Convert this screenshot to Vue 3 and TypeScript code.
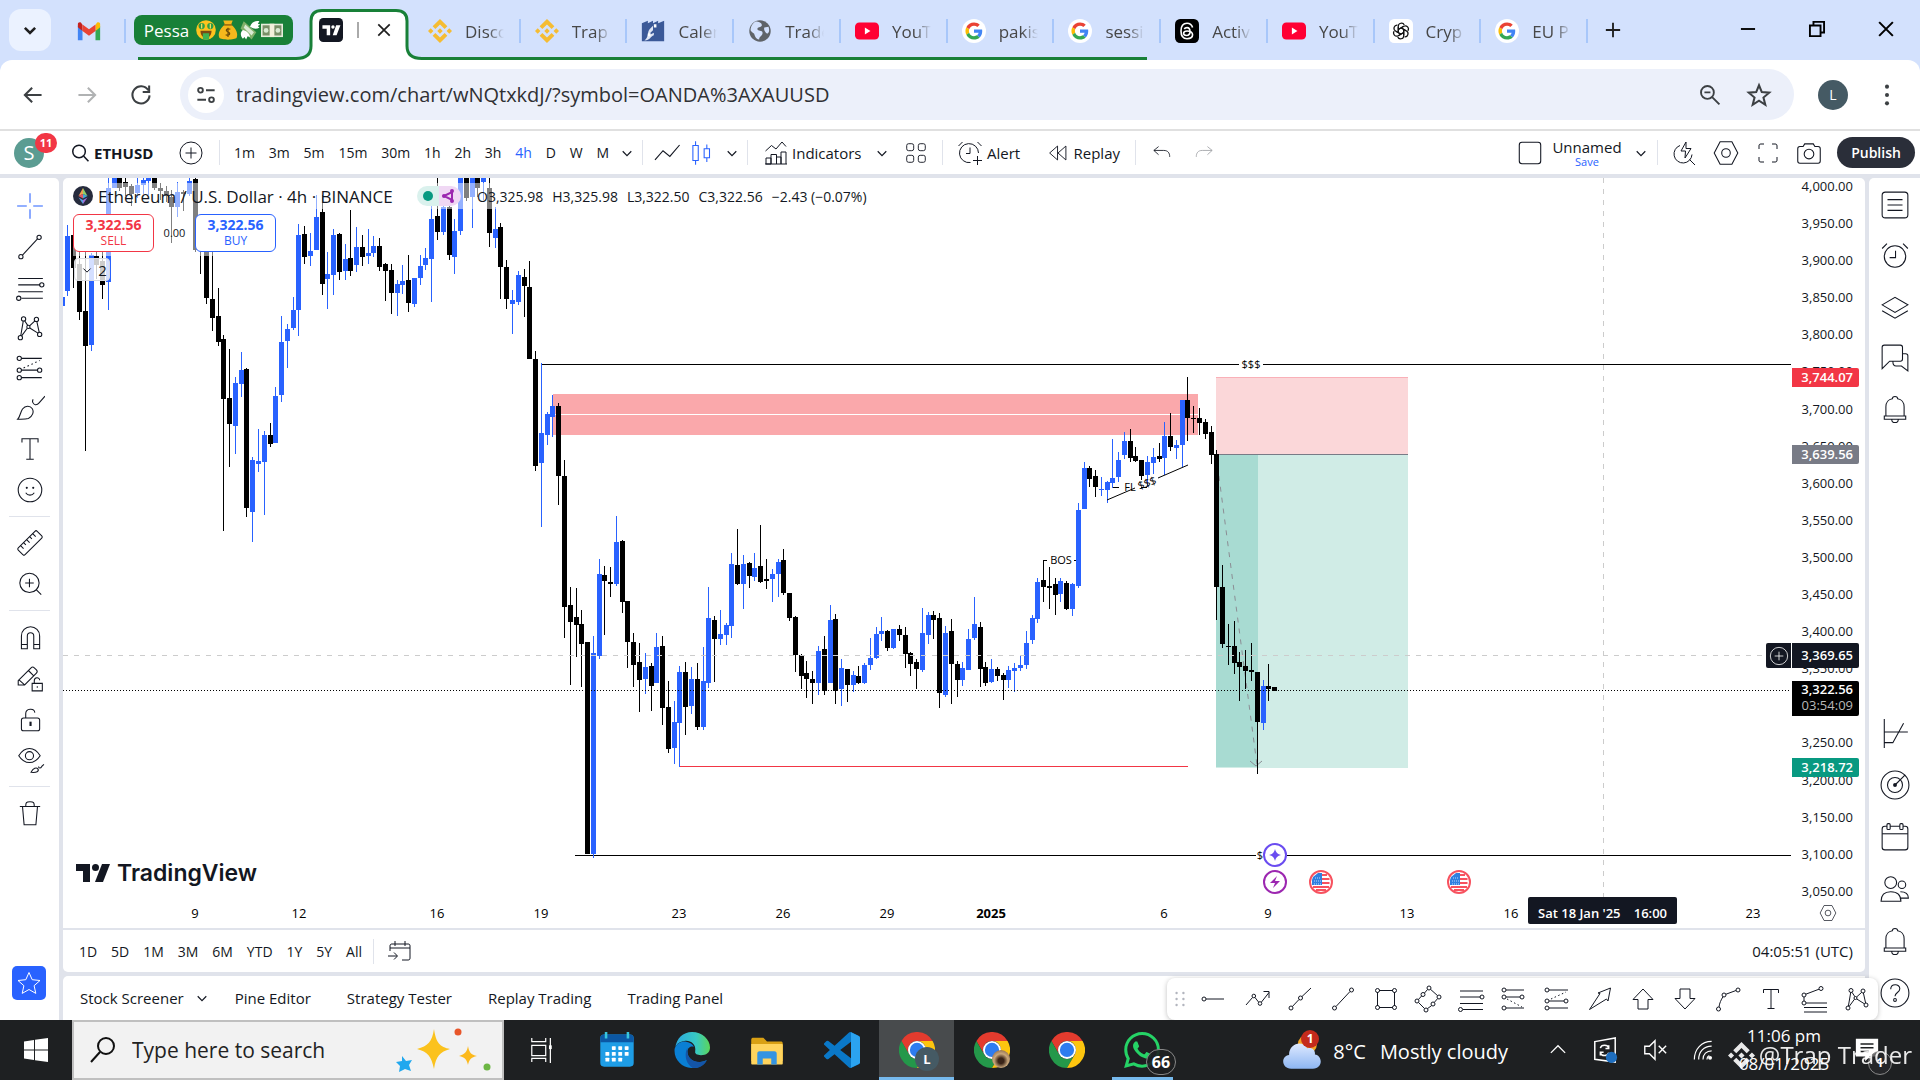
<script setup lang="ts">
import { h, ref, type FunctionalComponent } from 'vue'

/* ---------- icons ---------- */
const c = (x: number, y: number, r: number, extra = '') => `<circle cx="${x}" cy="${y}" r="${r}" ${extra}/>`
const p = (d: string, extra = '') => `<path d="${d}" ${extra}/>`
const F = 'fill="currentColor" stroke="none"'
const fill = (color: string) => `fill="${color}" stroke="none"`

const icons: Record<string, string> = {
  chevron: p('M9 12l5 5 5-5', 'stroke-width="1.400"'),
  cross: p('M14 2v9M14 17v9M2 14h9M17 14h9'),
  trend: c(5.5, 23, 2) + c(22.5, 5, 2) + p('M7 21.5L21 6.5'),
  fib: p('M3 6h23M3 12h20.5M3 18.5h23M6 24.5h20') + c(25, 12, 2) + c(3.5, 24.5, 2),
  pattern: c(8, 5.5, 2) + c(20, 6, 2) + c(5, 23, 2) + c(23, 20, 2) + c(12.5, 13, 1.5) + p('M7.7 7.5L5.4 21M9 7.3l3 4.5M13.6 12L18.6 7.4M20.4 8l2.2 10M11.5 14.2L6.2 21.4M13.8 14l7.6 4.8'),
  predict: c(4, 5, 2) + c(4, 16, 2) + c(4, 23, 2) + c(23, 16, 2) + p('M6 5h19M6 16h15M6 23h19') + p('M8 14l15-7', 'stroke-dasharray="1.5 2.5"'),
  predict2: c(4, 5, 2) + c(22, 12, 2) + c(4, 12, 2) + c(4, 23, 2) + p('M6 5h18M6 12h14M6 23h18') + p('M7 14l15 8', 'stroke-dasharray="1.5 2.5"'),
  brush: p('M2.5 23.500C5 21 4.500 18 7 14c2.600-3.300 7-3.500 9-.5s.5 7.500-3.500 9.300c-3 1-7 .7-10 .7zM17 5c-1.500 2 0 4.500 2 5 1.500.3 2.500-.5 3.500-1.700L28 2'),
  text: p('M6.500 8V4.500h15V8M14 4.500v19M10.500 23.500h7'),
  smile: c(14, 14, 11) + c(11, 12, 1, F) + c(17, 12, 1, F) + p('M10 16.500c2 3 6 3 8 0'),
  ruler: '<g transform="rotate(-45 14 14)"><rect x="1.500" y="9.500" width="25" height="9" rx="1.500"/><path d="M6 9.500v4M10 9.500v3M14 9.500v4M18 9.500v3M22 9.500v4"/></g>',
  zoomin: c(13.500, 13, 9) + p('M9.500 13h8M13.500 9v8M20 19.500l4.500 4.500'),
  magnet: p('M6 25V13a8.500 8.500 0 0 1 17 0v12h-5.500V13a3 3 0 0 0-6 0v12zM6 21h5.500M17.500 21H23'),
  pencillock: p('M3 16.500L15 4.500c1-1 2-1 3 0l2 2c1 1 1 2 0 3L9 20.500H3zM12.500 7l5 5M4 16l5 4.500M16 19h9.500v7H16zM18 19v-2.500c0-3.500 5-3.500 5-.5') + c(20.800, 22.500, .7, F),
  lock: '<rect x="6" y="13" width="17" height="12" rx="2"/>' + p('M10 13V9c0-5 8-5.500 8.500-1') + '<rect x="13.500" y="16.500" width="2" height="4" fill="currentColor" stroke="none"/>',
  eye: p('M3.500 10C9 1 18 1 23.500 10 18 18.500 9 18.500 3.500 10z') + c(13.500, 10, 3.800) + p('M15 25.500c2-4 5-5 6.500-3 1 2-1 3.500-6.500 3zM22 20c0 2 2 2 3 0l2-2'),
  trash: p('M4.500 8h19M7 8l1.500 17h11L21 8M10 8c0-4 .5-4.500 4-4.500s4 .5 4 4.500'),
  star: p('M14 3.500l3.200 7.200 7.800.8-5.900 5.200 1.700 7.700L14 20.500l-6.800 3.900 1.700-7.700L3 11.500l7.800-.8z'),
  search: c(11.500, 12, 8, 'stroke-width="1.900"') + p('M17.500 18l6 6.500', 'stroke-width="1.900"'),
  plusc: c(14, 14, 11) + p('M14 8.500v11M8.500 14h11'),
  linechart: p('M3.500 20l7-8 6 5L25 7'),
  candles: p('M8 3v4M8 21v4M5.500 7h5v14h-5zM18.500 6v4M18.500 18.500v4M16 10h5v8.500h-5z'),
  indicators: p('M3.500 12l6-5.500L14 10l6-7 4 4.500M4 25v-6h5v6zM9 25v-9.500h5.500V25M14.500 18H19v7M19 25V13h5v12M3 25h22'),
  grid: '<rect x="4" y="4" width="7.500" height="7.500" rx="2"/><rect x="16.500" y="4" width="7.500" height="7.500" rx="2"/><rect x="4" y="16.500" width="7.500" height="7.500" rx="2"/><rect x="16.500" y="16.500" width="7.500" height="7.500" rx="2"/>',
  alertplus: p('M22.500 14a9.500 9.500 0 1 0-8 9.500M14 8.500v6h-4M2.500 7l4-4M21.500 3l4 4M21.500 17v9M17 21.500h9'),
  alarm: c(14, 14.500, 10) + p('M14.500 9v6.500H9M2 7l4.500-4.500M21.500 2.500L26 7'),
  replay: p('M13.500 6.500v15L5 14zM22.500 6.500v15L14 14z'),
  undo: p('M10 6.500L4.500 11 10 16M4.500 11H16c5 0 7 3 7 7.500'),
  redo: p('M18 6.500l5.500 4.500L18 16M23.500 11H12c-5 0-7 3-7 7.500'),
  square: '<rect x="4" y="4" width="20" height="20" rx="2.500"/>',
  quick: p('M10 6.500a9 9 0 1 0 12 9M19.500 20.500L25 26M16 3l-5 9h4.500l-.5 7 6-9.500h-5z'),
  hex: p('M8.500 3.500h11l5.500 10.500-5.500 10.500h-11L3 14z') + c(14, 14, 4),
  full: p('M5 10V7c0-1.500.5-2 2-2h3M18 5h3c1.500 0 2 .5 2 2v3M23 18v3c0 1.500-.5 2-2 2h-3M10 23H7c-1.500 0-2-.5-2-2v-3'),
  camera: p('M10 5.500L8.500 8H5.500C4 8 3.500 8.500 3.500 10v11.500C3.500 23 4 23.500 5.500 23.500h17c1.500 0 2-.5 2-2V10c0-1.500-.5-2-2-2h-3L18 5.500z') + c(14, 15, 4.500),
  list: '<rect x="2" y="2" width="24" height="24" rx="3"/>' + p('M7 9h14M7 14h14M7 19h14'),
  layers: p('M2 12l12-7 12 7-12 7zM2 17.500l12 7 12-7'),
  chat: p('M2 24V4c0-1.500.7-2 2-2h15c1.500 0 2 .7 2 2v11c0 1.500-.5 2-2 2H9zM21 10h3c1.500 0 2 .5 2 2v14l-6-4.500h-5c-2 0-3-2-3-4.500'),
  bell: p('M5.500 20v-8c0-4 2.500-7 6-7.500 0-3 5-3 5 0 3.500.5 6 3.500 6 7.500v8M4 20.500h20v3H4zM11 24c0 3.500 6 3.500 6 0'),
  dom: p('M4 1v30M4 13h22M4 23h8L22 5'),
  radar: c(14, 14, 13) + c(14, 14, 7) + c(14, 14, 1.800, F) + p('M14 14L23.500 4.500'),
  calendar: '<rect x="2" y="4" width="24" height="22" rx="2.500"/>' + p('M2 11h24') + '<rect x="6.500" y="1.500" width="3" height="5.500" rx="1" fill="#fff"/><rect x="18.500" y="1.500" width="3" height="5.500" rx="1" fill="#fff"/>',
  people: c(10, 8, 5.500) + c(20.500, 10, 3.500) + p('M1 25.500c0-7 3.500-9 9-9s9.500 2 9.500 9zM19 16.500c4 0 7.500 1.500 7.500 6H19'),
  help: c(14, 14, 13) + p('M10 10.500c0-5.500 8.500-5.500 8.500-.5 0 3.500-4.500 3.500-4.500 7') + c(14, 20.500, 1.300),
  goto: p('M4 14V9c0-1.500.7-2 2-2h16c1.500 0 2 .5 2 2v12c0 1.500-.5 2-2 2h-6M4 11h20M9 4v5M19 4v5M2 19h9M8 15.500l3.500 3.500L8 22.500'),
  hray: c(4, 14, 2) + p('M6 14h18'),
  zigzag: p('M3 20l6.500-7.500M12 12.500l3.500 4.500M18.500 17L26 7.500M20.500 6.500H26V13') + c(10.800, 11, 1.800) + c(17, 18.500, 1.800),
  ray: c(5, 23, 2) + c(14.500, 13, 2) + p('M6.400 21.500l6.600-7M16 11.500L25 3'),
  rect: p('M7 5.500h14M7 22.500h14M5.500 7v14M22.500 7v14') + c(5.500, 5.500, 2) + c(22.500, 5.500, 2) + c(5.500, 22.500, 2) + c(22.500, 22.500, 2),
  rotrect: c(15, 3, 2) + c(25, 12, 2) + c(12, 25, 2) + c(3, 16, 2) + c(9, 9.500, 2) + c(19, 19, 2) + p('M13.500 4.500l-3 3.500M7.600 11L4.400 14.500M16.500 4.300l7 6.300M23.600 13.600l-3.300 3.800M17.600 20.600l-4.100 3M4.500 17.500l6 6'),
  arrowne: p('M3.500 24.500L14 8.500 12 8l12.500-5L22 16l-1.500-2z'),
  up: p('M14 4l10 10.500h-5V24H9v-9.500H4z'),
  down: p('M14 24L4 13.500h5V4h10v9.500h5z'),
  curve: c(4.500, 24, 2) + c(10, 10, 2) + c(24, 5, 2) + p('M5 22c.5-4 2-7 4-10.300M12 9.200L22 5.500'),
  fibch: c(4, 10, 2) + c(21, 3.500, 2) + c(4, 18, 2) + p('M5.800 9.200L19 4.200M4 12v4M6 18h21M4 22.500h23M4 27h23'),
  grip: [7, 14, 21].map(y => c(10, y, 1.400, F) + c(18, y, 1.400, F)).join(''),
  back: p('M24 14H5M13 5.500L4.500 14l8.500 8.500', 'stroke-width="2.400"'),
  fwd: p('M4 14h19M15 5.500l8.500 8.500-8.500 8.500', 'stroke-width="2.400"'),
  reload: p('M22.500 8.500A10 10 0 1 0 24 14.500M23.500 3v7.500H16', 'stroke-width="2.400"'),
  tune: c(7, 8, 3, 'stroke-width="2.400"') + c(21, 20, 3, 'stroke-width="2.400"') + p('M14 8h11M3 20h11', 'stroke-width="2.400"'),
  zoomout: c(11, 11, 7.500, 'stroke-width="2.200"') + p('M16.500 16.500L25 25M7.500 11h7', 'stroke-width="2.200"'),
  bookmark: p('M14 3.500l3 7.400 8 .6-6.200 5.200 2 7.800-6.800-4.300-6.800 4.300 2-7.800L3 11.500l8-.6z', 'stroke-width="2.200"'),
  dots: c(14, 5, 2.200, F) + c(14, 14, 2.200, F) + c(14, 23, 2.200, F),
  tabdown: p('M8 11.500l6 6 6-6', 'stroke-width="3"'),
  x: p('M6 6l16 16M22 6L6 22', 'stroke-width="2.400"'),
  plus: p('M14 4v20M4 14h20', 'stroke-width="2.600"'),
  min: p('M5 14h18', 'stroke-width="2.400"'),
  restore: p('M5 9.500h13.500V23H5zM9.500 9V5H23v13.500h-4', 'stroke-width="2.400"'),
  gmail: p('M2 24h5V13l-5-4z', fill('#4285f4')) + p('M21 24h5V9l-5 4z', fill('#34a853')) + p('M2 6.500V10l5 4V7.500L5.500 5C3.500 4 2 5 2 6.500z', fill('#c5221f')) + p('M26 6.500V10l-5 4V7.500L22.500 5C24.500 4 26 5 26 6.500z', fill('#fbbc04')) + p('M7 7v7l7 5.200 7-5.200V7l-7 5.200z', fill('#ea4335')),
  binance: '<g transform="scale(1.167)">' + p('M16.624 13.920l2.718 2.716-7.353 7.353-7.353-7.352 2.717-2.717 4.636 4.660 4.635-4.660zm4.637-4.636L24 12l-2.715 2.716L18.568 12l2.693-2.716zm-9.272 0l2.716 2.692-2.717 2.717L9.272 12l2.716-2.715zm-9.273 0L5.409 12l-2.692 2.692L0 12l2.716-2.716zM11.989.012l7.353 7.329-2.718 2.715-4.636-4.636-4.635 4.660-2.717-2.715z', F) + '</g>',
  ff: p('M1 5l7-3v3l6-3v3l6-3v3l7-3v24H1z', fill('#3b5998')) + p('M4 25c5-3 3-9 6-13l4-4v5l-3 3v2l4-2v3c-4 1-4 6-11 6z', fill('#dfe6f5')) + p('M15 6h3v4h-3zM8 17h3v3h-3z', fill('#fff')),
  globe: c(14, 14, 12.500, fill('#5f6368')) + p('M9 3c4 0 8 2 7 5-1 2-5 1-5 4 0 2 6 1 6 4 0 4-4 4-4 8-4 0-5-5-6-7-1-1-4-3-4-4C3 9 6 4 9 3zM19 10l5-1c1 4 1 6-1 8-2 0-5-4-4-7z', fill('#d3e1fd')),
  youtube: '<rect x="0" y="4" width="28" height="20" rx="5" fill="#ff0033" stroke="none"/>' + p('M11.500 10v8l6.500-4z', fill('#fff')),
  google: c(14, 14, 14, fill('#fff')) + '<g transform="translate(4 4) scale(.417)" stroke="none"><path fill="#EA4335" d="M24 9.500c3.540 0 6.710 1.220 9.210 3.600l6.850-6.850C35.900 2.380 30.470 0 24 0 14.620 0 6.510 5.380 2.560 13.220l7.980 6.190C12.430 13.720 17.740 9.500 24 9.500z"/><path fill="#4285F4" d="M46.980 24.550c0-1.570-.15-3.090-.38-4.550H24v9.020h12.940c-.58 2.960-2.260 5.480-4.780 7.180l7.730 6c4.510-4.180 7.090-10.360 7.090-17.650z"/><path fill="#FBBC05" d="M10.530 28.590c-.48-1.450-.76-2.990-.76-4.590s.27-3.140.76-4.590l-7.980-6.190C.92 16.460 0 20.120 0 24c0 3.880.92 7.540 2.560 10.780l7.970-6.190z"/><path fill="#34A853" d="M24 48c6.480 0 11.930-2.130 15.890-5.810l-7.730-6c-2.150 1.450-4.920 2.300-8.160 2.300-6.260 0-11.570-4.220-13.470-9.910l-7.980 6.190C6.510 42.620 14.620 48 24 48z"/></g>',
  threads: '<rect width="28" height="28" rx="6" fill="#000" stroke="none"/>' + p('M20.500 10c-1-3.500-3-5-6.500-5-5 0-7 3.500-7 9s2 9 7 9c4 0 6.500-2 6.500-4.500 0-3-3-4.500-6.500-4.500-2.500 0-4 1-4 2.700s1.500 2.600 3.500 2.600c3 0 4-2 4-4.600 0-3-1-4.700-3.500-4.700-1.500 0-2.500.5-3.200 1.700', 'stroke="#fff" stroke-width="1.900"'),
  openai: '<rect width="28" height="28" rx="6" fill="#fff" stroke="none"/>' + [0, 60, 120, 180, 240, 300].map(a => `<path transform="rotate(${a} 14 14)" stroke="#111" stroke-width="1.400" d="M10.800 15.800V8.500c0-4 5.500-5 7-1.500M10.800 12.200l6-3.500"/>`).join(''),
  tv: '<rect width="28" height="28" rx="5" fill="#131722" stroke="none"/>' + p('M4 8.500h9V20H9v-7.500H4zM20 8.500h5L20.500 20H16z', fill('#fff')) + c(16.300, 10.500, 2, fill('#fff')),
  windows: p('M2 5.500l10-1.500v9.500H2zM13 3.800L26 2v11.500H13zM2 14.500h10V24L2 22.500zM13 14.500h13V26l-13-1.800z', F),
  taskview: p('M3 1v4h15V1M3 9h15v11H3zM3 27v-4h15v4M23 1v27', 'stroke-width="1.300"') + '<rect x="21.500" y="9" width="3" height="4" fill="currentColor" stroke="none"/>',
  tcal: '<rect x="1" y="2" width="26" height="25" rx="3" fill="#1e9de6" stroke="none"/>' + p('M1 8V5c0-2 1-3 3-3h20c2 0 3 1 3 3v3z', fill('#0b57a4')) + p('M4.500 0h2v5h-2zM21.500 0h2v5h-2z', fill('#39c5dc')) + [[10, 11], [15, 11], [20, 11], [5, 15.500], [10, 15.500], [15, 15.500], [20, 15.500], [5, 20], [10, 20], [15, 20]].map(([x, y]) => `<rect x="${x}" y="${y}" width="3" height="3" rx=".5" fill="#fff" stroke="none"/>`).join(''),
  edge: '<defs><linearGradient id="eg1" x1="0" y1="0" x2="1" y2="0"><stop offset="0" stop-color="#2aa9e0"/><stop offset=".6" stop-color="#38c9c4"/><stop offset="1" stop-color="#5bd65a"/></linearGradient></defs>' + p('M1 12C2 5 7 0 14 0c8 0 14 6 14 12 0 4-3 6-7 6-3 0-5-1-4.500-3C17.500 9 12 6 8 7c-3 .5-6 2-7 5z', fill('url(#eg1)')) + p('M.5 13C2 8.500 6 7 9.500 7.500c3 .5 5 2 6 4-3-1-5 1-5 4 0 5 5 8 9 8 3 0 5-1.500 6-1.500-3 5-8 6.500-12 6C6 28-.5 21 .5 13z', fill('#0a7fd4')) + p('M10.500 12c-3 6-1 13 4 16 5 .5 9-2 11-6-6 3-17 1-15-10z', fill('#1455a8')),
  folder: p('M1 6c0-1.500.5-2 2-2h8l3 3h11c1.500 0 2 .5 2 2v14H1z', fill('#d9a014')) + p('M1 9h25c1 0 1 .5 1 1v15c0 .7-.3 1-1 1H2c-.7 0-1-.3-1-1z', fill('#ffd45e')) + p('M6 26v-9c0-1 .5-2 2-2h12c1.500 0 2 1 2 2v9h-4.500v-5h-7v5z', fill('#3594e2')),
  vscode: '<g transform="scale(1.167)">' + p('M23.150 2.587L18.210.21a1.494 1.494 0 0 0-1.705.29l-9.460 8.630-4.120-3.128a1 1 0 0 0-1.276.057L.327 7.261A1 1 0 0 0 .326 8.740L3.899 12 .326 15.260a1 1 0 0 0 .001 1.479L1.650 17.940a1 1 0 0 0 1.276.057l4.120-3.128 9.460 8.630a1.492 1.492 0 0 0 1.704.29l4.942-2.377A1.500 1.500 0 0 0 24 20.060V3.939a1.500 1.500 0 0 0-.85-1.352zm-5.146 14.861L10.826 12l7.178-5.448v10.896z', fill('#0a78c8')) + p('M18 .2l5.200 2.400c.5.300.8.700.8 1.300v16.200c0 .6-.3 1-.8 1.300L18 23.800z', fill('#2ba3f0')) + '</g>',
  chrome: '<g transform="scale(.583)" stroke="none"><path fill="#e33b2e" d="M24 12h20.800A24 24 0 0 0 3.200 12l10.400 18A12 12 0 0 1 24 12z"/><path fill="#24984a" d="M13.600 30L3.200 12A24 24 0 0 0 24 48l10.400-18A12 12 0 0 1 13.600 30z"/><path fill="#fdc50f" d="M34.400 30L24 48A24 24 0 0 0 44.800 12H24A12 12 0 0 1 34.400 30z"/><circle cx="24" cy="24" r="12" fill="#fff"/><circle cx="24" cy="24" r="9.500" fill="#2e7cf0"/></g>',
  whatsapp: '<g transform="scale(1.167)">' + p('M17.472 14.382c-.297-.149-1.758-.867-2.030-.967-.273-.099-.471-.148-.67.15-.197.297-.767.966-.94 1.164-.173.199-.347.223-.644.075-.297-.15-1.255-.463-2.390-1.475-.883-.788-1.480-1.761-1.653-2.059-.173-.297-.018-.458.13-.606.134-.133.298-.347.446-.52.149-.174.198-.298.298-.497.099-.198.05-.371-.025-.52-.075-.149-.669-1.612-.916-2.207-.242-.579-.487-.5-.669-.51-.173-.008-.371-.01-.57-.01-.198 0-.52.074-.792.372-.272.297-1.040 1.016-1.040 2.479 0 1.462 1.065 2.875 1.213 3.074.149.198 2.096 3.200 5.077 4.487.709.306 1.262.489 1.694.625.712.227 1.360.195 1.871.118.571-.085 1.758-.719 2.006-1.413.248-.694.248-1.289.173-1.413-.074-.124-.272-.198-.57-.347m-5.421 7.403h-.004a9.870 9.870 0 0 1-5.031-1.378l-.361-.214-3.741.982.998-3.648-.235-.374a9.860 9.860 0 0 1-1.510-5.260c.001-5.450 4.436-9.884 9.888-9.884 2.640 0 5.122 1.030 6.988 2.898a9.825 9.825 0 0 1 2.893 6.994c-.003 5.450-4.437 9.884-9.885 9.884m8.413-18.297A11.815 11.815 0 0 0 12.050 0C5.495 0 .16 5.335.157 11.892c0 2.096.547 4.142 1.588 5.945L.057 24l6.305-1.654a11.882 11.882 0 0 0 5.683 1.448h.005c6.554 0 11.890-5.335 11.893-11.893a11.821 11.821 0 0 0-3.480-8.413z', fill('#25d366')) + '</g>',
  cloud: '<defs><linearGradient id="cl1" x1="0" y1="0" x2="0" y2="1"><stop offset="0" stop-color="#dfeaff"/><stop offset="1" stop-color="#8db6f2"/></linearGradient></defs>' + c(18, 9, 7, fill('#f5a524')) + p('M6 27c-7 0-8-9-1.500-10C4 9 14 5 18 12c3-1 6 1 5.500 4.500C29 17 30 27 22 27z', fill('url(#cl1)')),
  caret: p('M4 18L14 8l10 10', 'stroke-width="1.800"'),
  sync: p('M3 5l22-4v26L3 24z', 'stroke-width="1.600"') + p('M9 12c1-4 8-4 9 0M18 9v3.500h-3.500M18 17c-1 4-8 4-9 0M9 20v-3.500h3.500', 'stroke-width="1.600"') + c(21, 22, 6, fill('#1f6fc0')),
  mute: p('M3 10h5l6-6v20l-6-6H3zM18 9.500l8 8M26 9.500l-8 8', 'stroke-width="1.500"'),
  wifi: p('M3 26C3 13 12 3 25 3M8.500 26C8.500 16 15 9 25 9M14 26c0-6.500 4.500-11 11-11', 'stroke-width="1.500"') + c(23, 24, 2.500, F) + p('M19 26c0-2 1-4 3-5', 'stroke-width="1.500"'),
  notif: p('M2 2h24v19h-9l-5 5v-5H2z', F) + p('M7 7.500h14M7 11.500h14M7 15.500h9', 'stroke="#1e2022" stroke-width="1.600"'),
  sparkles: p('M46 4c2 14 6 18 16 20-10 3-14 7-16 20-3-13-6-17-17-20 11-3 15-7 17-20z', fill('#fbc21d')) + p('M80 21c1 6 3 9 9 10-6 1-8 4-9 9-1-5-3-8-9-9 6-2 8-4 9-10z', fill('#fcb91c')) + p('M14 31l4 5 6-1-3 5 2 6-6-2-6 3 1-6-4-4 6-1z', fill('#21a8ee')) + c(70, 7, 3.500, fill('#e8562a')) + c(99, 42, 3.500, fill('#6cb644')),
  moneyface: c(14, 14, 12.500, fill('#fdc31e')) + p('M7 15h14c0 6-3 9-7 9s-7-3-7-9z', fill('#7a4a12')) + p('M10 18h8v7c-2 2-6 2-8 0z', fill('#3fb34f')) + c(8.500, 9, 4, fill('#2f9e44')) + c(19.500, 9, 4, fill('#2f9e44')) + p('M8.500 6v6M19.500 6v6', 'stroke="#ffe066" stroke-width="1.500"'),
  bag: p('M10 7L8 2h12l-2 5c7 6 9 12 7 17-2 3-20 3-22 0-2-5 0-11 7-17z', fill('#f5b81c')) + p('M9 7.500h10', 'stroke="#9a6a10" stroke-width="2"') + p('M17 13c-5-2-7 2-3 3.500s2 5.500-3 3.500M14 11v12', 'stroke="#6b4a08" stroke-width="1.500"'),
  wings: p('M6 3l16 14-6 9L2 12z', fill('#7fb069')) + p('M8 7l11 10-3 4L6 11z', fill('#d9ead3')) + p('M14 10c2-7 8-8 12-7l-2 3 3 1-3 2 2 2c-4 2-7 2-12-1z', fill('#fff')) + p('M5 14c-4 3-3 8 0 11l2-2 2 3 2-4 3 1c0-4-4-8-9-9z', fill('#fff')),
  note: '<rect x="0" y="6" width="28" height="17" fill="#e6eddc" stroke="none"/><rect x="2" y="8" width="24" height="13" fill="#7a8f68" stroke="none"/>' + p('M11 6h6v17h-6z', fill('#f3f0dc')) + c(6.500, 14.500, 3, fill('#d9ead3')) + c(21.500, 14.500, 3, fill('#d9ead3')),
}

const Icon: FunctionalComponent<{ n: string; s?: number; w?: number }> = (props) =>
  h('svg', {
    class: 'ic',
    width: props.w ?? props.s ?? 34,
    height: props.s ?? 34,
    viewBox: props.w ? `0 0 ${props.w} ${props.s}` : '0 0 28 28',
    fill: 'none',
    stroke: 'currentColor',
    'aria-hidden': 'true',
    innerHTML: icons[props.n],
  })
Icon.props = ['n', 's', 'w']

/* ---------- browser ---------- */
const tabs = [
  { i: 'binance', t: 'Disco' }, { i: 'binance', t: 'Trap' }, { i: 'ff', t: 'Calen' },
  { i: 'globe', t: 'Trade' }, { i: 'youtube', t: 'YouT' }, { i: 'google', t: 'pakis' },
  { i: 'google', t: 'sessi' }, { i: 'threads', t: 'Activ' }, { i: 'youtube', t: 'YouT' },
  { i: 'openai', t: 'Cryp' }, { i: 'google', t: 'EU P' },
]
const url = ref('tradingview.com/chart/wNQtxkdJ/?symbol=OANDA%3AXAUUSD')
const query = ref('')

/* ---------- chart page ---------- */
const intervals = ['1m', '3m', '5m', '15m', '30m', '1h', '2h', '3h', '4h', 'D', 'W', 'M']
const drawTools = ['cross', 'trend', 'fib', 'pattern', 'predict', 'brush', 'text', 'smile']
const measureTools = ['ruler', 'zoomin']
const modeTools = ['magnet', 'pencillock', 'lock', 'eye']
const sideTop = ['list', 'alarm', 'layers', 'chat', 'bell']
const sideBottom = ['dom', 'radar', 'calendar', 'people', 'bell', 'help']
const ranges = ['1D', '5D', '1M', '3M', '6M', 'YTD', '1Y', '5Y', 'All']
const panels = ['Pine Editor', 'Strategy Tester', 'Replay Trading', 'Trading Panel']
const favourites = ['hray', 'zigzag', 'ray', 'trend', 'rect', 'rotrect', 'fib', 'predict2', 'predict', 'arrowne', 'up', 'down', 'curve', 'text', 'fibch', 'pattern']
const prices = Array.from({ length: 20 }, (_, k) => (4000 - k * 50).toLocaleString('en-US') + '.00')
const days: [number, string][] = [
  [195, '9'], [299, '12'], [437, '16'], [541, '19'], [679, '23'], [783, '26'], [887, '29'],
  [991, '2025'], [1164, '6'], [1268, '9'], [1407, '13'], [1511, '16'], [1753, '23'],
]

/* up flag, high, body top, body bottom, low */
const FIRST_BAR = -23
const bars: number[][] = [
  [1,297,297,306,306],[1,225,236,291,296],[0,225,235,268,288],[0,252,264,312,320],[0,252,311,346,451],[1,253,255,345,351],
  [0,252,256,265,279],[0,252,261,285,299],[1,178,188,282,310],[1,170,170,188,188],[0,170,170,188,191],[0,178,182,187,196],
  [0,184,186,194,206],[1,178,185,193,198],[1,178,180,185,194],[1,170,170,181,195],[0,170,170,188,190],[0,183,188,191,200],
  [0,186,191,196,202],[0,190,197,207,243],[1,182,192,207,217],[0,190,192,194,211],[1,178,181,194,196],[0,178,179,250,252],
  [0,240,242,251,274],[0,245,250,298,304],[0,252,299,318,331],[0,288,316,342,346],[0,335,339,399,531],[0,349,398,424,467],
  [1,377,383,426,454],[1,352,370,384,397],[0,368,369,508,517],[1,457,460,512,542],[1,429,461,464,472],[1,431,435,462,515],
  [0,423,435,444,447],[1,387,396,443,443],[1,316,342,395,402],[1,324,329,341,368],[1,297,310,328,330],[1,224,235,310,336],
  [0,226,234,257,264],[1,233,251,256,266],[1,195,217,250,250],[0,195,212,284,295],[1,252,274,279,309],[1,229,235,275,295],
  [0,233,234,272,280],[1,244,259,271,280],[0,210,258,271,276],[1,227,247,265,272],[0,235,247,257,266],[1,229,253,256,264],
  [1,236,246,253,257],[0,238,246,267,271],[0,263,264,271,301],[0,264,270,293,314],[1,280,284,293,316],[1,265,281,285,294],
  [0,255,280,303,312],[1,278,278,304,307],[1,255,266,278,285],[1,248,258,265,270],[1,205,219,259,302],[0,178,216,232,240],
  [1,202,207,232,235],[0,205,207,255,260],[1,219,231,257,274],[1,170,170,231,235],[0,170,170,198,201],[1,170,170,197,228],
  [0,170,170,188,197],[1,178,178,182,200],[0,178,188,233,247],[1,207,229,238,248],[0,223,227,267,299],[0,260,267,299,309],
  [1,290,300,304,334],[1,271,275,302,305],[0,269,277,286,317],[0,261,287,359,359],[0,351,359,466,471],[1,363,433,463,527],
  [1,412,414,435,445],[1,395,406,417,437],[0,403,406,476,505],[0,460,476,607,638],[0,587,605,622,685],[0,588,617,625,657],
  [0,610,624,644,687],[0,642,642,854,854],[1,636,653,854,858],[1,559,574,656,659],[0,566,575,581,635],[0,567,582,584,597],
  [1,516,542,584,586],[0,540,541,602,613],[0,601,601,642,668],[0,633,642,665,687],[0,643,662,680,712],[1,653,667,679,694],
  [0,663,666,686,711],[1,633,647,683,683],[0,636,646,708,725],[0,681,707,749,753],[1,701,722,748,764],[1,666,672,723,767],
  [0,662,672,707,735],[1,667,679,706,714],[0,663,679,727,730],[1,647,681,727,730],[1,587,618,683,688],[0,616,620,639,682],
  [1,610,634,639,645],[1,623,625,635,645],[1,553,564,626,638],[0,529,565,584,585],[1,555,564,584,609],[0,562,563,576,588],
  [1,553,568,577,581],[0,525,566,582,583],[0,559,579,581,589],[1,569,574,579,602],[1,559,562,574,597],[0,549,560,593,595],
  [0,593,593,618,621],[0,616,617,655,672],[0,654,655,676,689],[0,661,673,679,698],[0,671,679,683,704],[1,646,651,683,695],
  [0,636,649,691,695],[1,605,620,683,683],[0,614,619,691,704],[1,659,668,689,706],[0,669,669,685,702],[1,671,675,685,692],
  [0,666,676,683,684],[1,663,665,683,684],[1,638,658,665,670],[1,627,634,658,659],[1,617,631,634,641],[0,630,631,648,651],
  [1,629,629,648,649],[0,625,629,635,641],[0,627,635,654,668],[0,652,653,664,676],[0,659,662,669,689],[1,608,633,670,672],
  [1,612,615,635,644],[0,611,615,620,639],[0,613,618,693,708],[1,626,633,695,697],[0,619,631,664,704],[0,661,664,680,697],
  [1,662,668,680,686],[1,629,639,670,670],[1,597,624,638,640],[0,622,627,669,687],[0,662,667,683,686],[1,659,669,682,683],
  [0,667,669,676,681],[0,673,675,680,700],[1,666,670,680,688],[1,663,668,671,692],[1,656,665,668,671],[1,631,643,665,669],
  [1,615,618,640,644],[1,578,582,619,623],[0,560,580,587,602],[0,567,586,588,609],[0,578,584,595,615],[1,578,581,594,602],
  [0,581,583,609,610],[1,583,584,609,616],[1,503,510,586,588],[1,462,468,509,509],[0,466,468,479,487],[0,470,476,487,497],
  [1,477,489,490,496],[1,481,482,490,503],[1,439,478,483,488],[1,452,460,477,482],[1,432,441,455,459],[0,429,441,458,462],
  [0,447,456,461,462],[0,460,460,476,480],[1,456,462,475,487],[1,448,457,463,474],[0,443,456,459,462],[1,422,436,458,475],
  [0,413,436,447,451],[1,440,445,448,459],[1,400,400,445,467],[0,377,400,418,441],[0,406,418,419,433],[0,408,418,423,435],
  [0,419,422,434,439],[0,426,432,455,464],[0,450,454,587,620],[0,565,587,644,648],[0,624,646,647,665],[0,621,646,663,674],
  [0,652,662,667,701],[0,650,666,671,689],[0,643,670,672,681],[0,672,672,722,774],[1,680,686,723,730],[0,664,686,689,701],
  [0,687,687,691,691],
]
const candles = bars.map(([up, high, top, bottom, low], k) => ({
  x: Math.round(194.5 + 5.773 * (k + FIRST_BAR)),
  color: up ? '#2962ff' : '#000',
  high, top, low,
  wick: low - high,
  body: bottom - top,
}))
</script>

<template>
  <div class="screen">
    <header class="tabstrip">
      <svg class="outline" width="1150" height="60" aria-hidden="true">
        <path d="M298 60Q311 57 311 46V21Q311 10 322 10H396Q407 10 407 21V46Q407 57 420 60Z" fill="#fff" />
        <path d="M138 58.500H296Q311 58.500 311 46V21Q311 10.500 322 10.500H396Q407 10.500 407 21V46Q407 58.500 422 58.500H1147" fill="none" stroke="#188038" stroke-width="3" />
      </svg>
      <button class="tabsearch" aria-label="Search tabs"><Icon n="tabdown" :s="24" /></button>
      <button class="pinned" aria-label="Gmail"><Icon n="gmail" :s="26" /></button>
      <button class="group"><span>Pessa</span><Icon n="moneyface" :s="22" /><Icon n="bag" :s="22" /><Icon n="wings" :s="22" /><Icon n="note" :s="22" /></button>
      <div class="active-tab">
        <Icon n="tv" :s="24" /><i></i>
        <button aria-label="Close tab"><Icon n="x" :s="20" /></button>
      </div>
      <nav class="tabs">
        <a v-for="(t, k) in tabs" :key="k" href="#" :class="['tab', t.i]"><Icon :n="t.i" :s="24" /><span>{{ t.t }}</span></a>
      </nav>
      <button class="newtab" aria-label="New tab"><Icon n="plus" :s="20" /></button>
      <div class="wincontrols">
        <button aria-label="Minimize"><Icon n="min" :s="22" /></button>
        <button aria-label="Restore"><Icon n="restore" :s="22" /></button>
        <button aria-label="Close"><Icon n="x" :s="24" /></button>
      </div>
    </header>

    <div class="addressrow">
      <div class="navrow">
        <button aria-label="Back"><Icon n="back" :s="24" /></button>
        <button aria-label="Forward" class="off"><Icon n="fwd" :s="24" /></button>
        <button aria-label="Reload"><Icon n="reload" :s="24" /></button>
      </div>
      <div class="omnibox">
        <button class="site" aria-label="Site information"><Icon n="tune" :s="22" /></button>
        <input v-model="url" aria-label="Address" />
        <button aria-label="Zoom"><Icon n="zoomout" :s="24" /></button>
        <button aria-label="Bookmark"><Icon n="bookmark" :s="26" /></button>
      </div>
      <button class="profile" aria-label="Profile">L</button>
      <button class="menu" aria-label="Menu"><Icon n="dots" :s="26" /></button>
    </div>

    <div class="toolbar">
      <div class="seg seg-user"><button class="user" aria-label="Account">S<b>11</b></button></div>
      <div class="seg seg-symbol">
        <button class="symbol"><Icon n="search" :s="22" />ETHUSD</button>
        <button aria-label="Compare"><Icon n="plusc" :s="28" /></button>
      </div>
      <div class="seg seg-int">
        <button v-for="t in intervals" :key="t" :class="{ on: t === '4h' }">{{ t }}</button>
        <button aria-label="More intervals" class="drop"><Icon n="chevron" :s="24" /></button>
      </div>
      <div class="seg seg-style">
        <button aria-label="Line"><Icon n="linechart" :s="32" /></button>
        <button aria-label="Candles" class="on"><Icon n="candles" :s="30" /></button>
        <button aria-label="Chart types"><Icon n="chevron" :s="24" /></button>
      </div>
      <div class="seg seg-ind">
        <button><Icon n="indicators" :s="28" />Indicators</button>
        <button aria-label="Indicator templates"><Icon n="chevron" :s="24" /></button>
        <button aria-label="Layout grid"><Icon n="grid" :s="26" /></button>
      </div>
      <div class="seg seg-alert">
        <button><Icon n="alertplus" :s="28" />Alert</button>
        <button><Icon n="replay" :s="26" />Replay</button>
      </div>
      <div class="seg seg-undo">
        <button aria-label="Undo"><Icon n="undo" :s="24" /></button>
        <button aria-label="Redo" class="off"><Icon n="redo" :s="24" /></button>
      </div>
      <div class="seg seg-name">
        <button aria-label="Select layout"><Icon n="square" :s="30" /></button>
        <button class="unnamed">Unnamed<small>Save</small></button>
        <button aria-label="Manage layouts"><Icon n="chevron" :s="24" /></button>
      </div>
      <div class="seg seg-right">
        <button aria-label="Quick search"><Icon n="quick" :s="28" /></button>
        <button aria-label="Settings"><Icon n="hex" :s="30" /></button>
        <button aria-label="Fullscreen"><Icon n="full" :s="28" /></button>
        <button aria-label="Snapshot"><Icon n="camera" :s="30" /></button>
        <button class="publish">Publish</button>
      </div>
    </div>

    <main class="work">
      <aside class="left">
        <div class="tools t8"><button v-for="t in drawTools" :key="t" :class="{ on: t === 'cross' }" :aria-label="t"><Icon :n="t" :s="30" /></button></div>
        <hr />
        <div class="tools t2"><button v-for="t in measureTools" :key="t" :aria-label="t"><Icon :n="t" :s="30" /></button></div>
        <hr />
        <div class="tools t4"><button v-for="t in modeTools" :key="t" :aria-label="t"><Icon :n="t" :s="30" /></button></div>
        <hr />
        <div class="tools t1"><button aria-label="Remove"><Icon n="trash" :s="30" /></button></div>
        <button class="fav" aria-label="Favorites"><Icon n="star" :s="28" /></button>
      </aside>

      <section class="center">
        <div class="chart">
          <svg class="plot" role="img" aria-label="ETHUSD 4h chart">
            <g transform="translate(-63 -178)" shape-rendering="crispEdges">
              <rect x="553" y="394" width="645" height="41" fill="#faa8ab" />
              <rect x="553" y="414" width="645" height="1" fill="#fff" />
              <rect x="1216" y="377" width="192" height="77" fill="#fbd7d9" />
              <rect x="1216" y="377" width="192" height="1" fill="#f9b0b8" />
              <rect x="1216" y="454" width="192" height="314" fill="#d0ece6" />
              <rect x="1216" y="454" width="42" height="313" fill="#a8dbd2" />
              <rect x="1216" y="454" width="192" height="1" fill="#787b86" />
              <g fill="none" stroke="#8b8d94" shape-rendering="auto">
                <path d="M1216 454L1257 765" stroke-dasharray="5 6" />
                <path d="M1250 761L1256 766L1262 761" />
              </g>
              <rect x="541" y="364" width="698" height="1" /><rect x="1263" y="364" width="528" height="1" />
              <rect x="575" y="855" width="681" height="1" /><rect x="1287" y="855" width="504" height="1" />
              <rect x="679" y="766" width="509" height="1" fill="#f23645" />
              <rect x="1043" y="560" width="4" height="1" /><rect x="1074" y="560" width="3" height="1" />
              <rect x="1112" y="487" width="7" height="1" /><rect x="1141" y="487" width="6" height="1" />
              <g v-for="(b, k) in candles" :key="k" :fill="b.color">
                <rect :x="b.x" :y="b.high" width="1" :height="b.wick" />
                <rect :x="b.x - 2" :y="b.top" width="5" :height="b.body" />
              </g>
              <path d="M1107 500L1135 488M1158 478L1188 465" stroke="#000" shape-rendering="auto" />
              <path d="M63 655.500H1766M1603.500 178V897" stroke="#ccc" stroke-dasharray="5 6" />
              <path d="M63 690.500H1791" stroke="#000" stroke-dasharray="1 2" />
            </g>
            <g transform="translate(-63 -178)" class="note">
              <text x="1251" y="368">$$$</text>
              <text x="1061" y="564">BOS</text>
              <text x="1130" y="491">FL</text>
              <text x="1147" y="487" transform="rotate(-20 1147 483)">$$$</text>
              <text x="1260" y="859">$</text>
            </g>
            <g transform="translate(-63 -178)">
              <g fill="#fff" stroke-width="2">
                <circle cx="1275" cy="855" r="11" stroke="#6a4cf0" />
                <circle cx="1275" cy="882" r="11" stroke="#9c27b0" />
              </g>
              <path d="M1275 849Q1276 854 1281 855Q1276 856 1275 861Q1274 856 1269 855Q1274 854 1275 849Z" fill="#6a4cf0" />
              <path d="M1277 876L1270 883H1275L1273 888L1280 881H1275Z" fill="#9c27b0" />
              <g v-for="x in [1321, 1459]" :key="x" :transform="`translate(${x} 882)`">
                <circle r="11" fill="#fff" stroke="#f7525f" stroke-width="2" />
                <path d="M0-7H6M0-3H8.500M0 1H8.500M-8 5H8M-5 8H5" stroke="#f7525f" stroke-width="2" />
                <path d="M-8-5L-3-9H1V3H-9V-2Z" fill="#2f7fe0" />
                <path d="M-6-4H0M-7-1H0M-7 2H0" stroke="#bcd9ff" stroke-dasharray="1 1" />
              </g>
              <g class="days"><text v-for="[x, t] in days" :key="x" :x="x" y="918" :class="{ year: t === '2025' }">{{ t }}</text></g>
              <rect x="1528" y="897" width="149" height="27" rx="2" fill="#131722" />
              <text x="1538" y="918" class="when">Sat 18 Jan '25</text>
              <text x="1667" y="918" class="when end">16:00</text>
            </g>
          </svg>
          <div class="legend">
            <div class="title">
              <svg width="20" height="20" viewBox="0 0 20 20" aria-hidden="true"><circle cx="10" cy="10" r="10" fill="#262b3d" /><path d="M10 2L5.500 10 10 8z" fill="#f0a050" /><path d="M10 2l4.500 8L10 8z" fill="#8fd06a" /><path d="M5.500 10L10 8v4.500z" fill="#e05a6a" /><path d="M14.500 10L10 8v4.500z" fill="#45a8d8" /><path d="M5.500 11.500L10 14v4z" fill="#5aa0e0" /><path d="M14.500 11.500L10 14v4z" fill="#a070d8" /></svg>
              <h1>Ethereum / U.S. Dollar · 4h · BINANCE</h1>
              <span class="pill"><i></i><svg width="22" height="22" viewBox="0 0 22 22" fill="#9c27b0" stroke="#9c27b0" stroke-width="2" aria-hidden="true"><path d="M5 11L13 7V15Z" fill="none" /><circle cx="5" cy="11" r="1" /><circle cx="13" cy="6" r="1" /><circle cx="13" cy="16" r="1" /></svg></span>
              <p><span>O3,325.98</span><span>H3,325.98</span><span>L3,322.50</span><span>C3,322.56</span><span>−2.43 (−0.07%)</span></p>
            </div>
            <div class="trade">
              <button class="sell"><b>3,322.56</b>SELL</button>
              <span>0.00</span>
              <button class="buy"><b>3,322.56</b>BUY</button>
            </div>
            <button class="more"><Icon n="chevron" :s="20" />2</button>
          </div>
          <div class="brand">
            <svg width="36" height="18" viewBox="0 0 36 18" fill="#131722" aria-hidden="true"><path d="M0 0H14V18H7V7H0Z" /><circle cx="19.500" cy="3.500" r="3.500" /><path d="M26 0H34L27 18H19Z" /></svg>
            TradingView
          </div>
          <div class="axis">
            <ul><li v-for="v in prices" :key="v">{{ v }}</li></ul>
            <span class="tag red">3,744.07</span>
            <span class="tag gray">3,639.56</span>
            <span class="tag cur"><button aria-label="Add order"><Icon n="plusc" :s="22" /></button>3,369.65</span>
            <span class="tag last">3,322.56<small>03:54:09</small></span>
            <span class="tag green">3,218.72</span>
            <button class="axisset" aria-label="Axis settings"><Icon n="hex" :s="20" /></button>
          </div>
        </div>
        <div class="rangebar">
          <div class="ranges"><button v-for="r in ranges" :key="r">{{ r }}</button></div>
          <i></i>
          <button aria-label="Go to date"><Icon n="goto" :s="28" /></button>
          <span>04:05:51 (UTC)</span>
        </div>
        <nav class="panels">
          <button class="screener">Stock Screener <Icon n="chevron" :s="24" /></button>
          <button v-for="t in panels" :key="t">{{ t }}</button>
        </nav>
      </section>

      <aside class="right">
        <div class="side-top"><button v-for="t in sideTop" :key="t" :aria-label="t"><Icon :n="t" :s="30" /></button></div>
        <div class="side-bottom"><button v-for="t in sideBottom" :key="t" :aria-label="t"><Icon :n="t" :s="30" /></button></div>
      </aside>

      <div class="floating">
        <span class="grip"><Icon n="grip" :s="24" /></span>
        <button v-for="t in favourites" :key="t" :aria-label="t"><Icon :n="t" :s="28" /></button>
      </div>
    </main>

    <footer class="taskbar">
      <button class="start" aria-label="Start"><Icon n="windows" :s="28" /></button>
      <label class="search">
        <svg width="28" height="28" viewBox="0 0 28 28" fill="none" stroke="#111" stroke-width="2" aria-hidden="true"><circle cx="17" cy="10" r="8" /><path d="M11 16L2 26" /></svg>
        <input v-model="query" placeholder="Type here to search" aria-label="Search" />
        <Icon n="sparkles" :s="50" :w="106" />
      </label>
      <div class="apps">
        <button aria-label="Task view"><Icon n="taskview" :s="26" /></button>
        <button aria-label="Calendar"><Icon n="tcal" :s="36" /></button>
        <button aria-label="Edge"><Icon n="edge" :s="36" /></button>
        <button aria-label="Explorer"><Icon n="folder" :s="34" /></button>
        <button aria-label="VS Code"><Icon n="vscode" :s="36" /></button>
        <button aria-label="Chrome L" class="current"><Icon n="chrome" :s="36" /><b class="pl">L</b></button>
        <button aria-label="Chrome profile"><Icon n="chrome" :s="36" /><b class="pp"></b></button>
        <button aria-label="Chrome"><Icon n="chrome" :s="36" /></button>
        <button aria-label="WhatsApp" class="open"><Icon n="whatsapp" :s="36" /><b class="count">66</b></button>
      </div>
      <div class="weather"><span><Icon n="cloud" :s="38" /><b>1</b></span><em>8°C</em>Mostly cloudy</div>
      <div class="tray">
        <Icon n="caret" :s="20" /><Icon n="sync" :s="26" /><Icon n="mute" :s="26" /><Icon n="wifi" :s="22" />
        <time>11:06 pm<br />08/01/2025</time>
        <Icon n="notif" :s="26" />
      </div>
      <b class="ncount">1</b>
      <div class="watermark"><Icon n="binance" :s="27" />@Trap Trader</div>
    </footer>
  </div>
</template>

<style>
body { margin: 0; }
</style>

<style scoped>
.screen { min-height: 100vh; display: flex; flex-direction: column; background: #e0e3eb; font-family: "Open Sans", "Noto Sans", sans-serif; font-size: 14px; color: #131722; }
button, input { font: inherit; color: inherit; background: none; border: 0; padding: 0; margin: 0; }
button { display: flex; align-items: center; justify-content: center; white-space: nowrap; }
.ic { display: block; flex: none; }
a { color: inherit; text-decoration: none; }

.tabstrip { position: relative; height: 60px; display: flex; align-items: flex-start; background: #d3e1fd; color: #1f1f1f; }
.outline { position: absolute; left: 0; top: 0; }
.tabstrip > * { flex: none; }
.tabsearch { width: 42px; height: 42px; margin: 9px 0 0 9px; border-radius: 12px; background: #ebf2ff; }
.pinned { width: 75px; height: 24px; margin-top: 19px; padding-left: 3px; border-right: 2px solid #a8c7fa; }
.group { position: relative; width: 159px; height: 30px; margin: 15px 0 0 8px; border-radius: 8px; background: #188038; color: #fff; font-size: 17px; }
.group span { margin-right: 6px; }
.active-tab { position: relative; width: 90px; height: 30px; margin: 15px 0 0 26px; display: flex; align-items: center; }
.active-tab i { width: 2px; height: 16px; margin: 0 15px 0 14px; background: #aaa; }
.tabstrip .tabs { flex: 0 1 1174px; min-width: 0; display: flex; margin-top: 19px; margin-left: 5px; }
.tab { flex: 1 1 0; min-width: 0; height: 24px; display: flex; align-items: center; border-right: 2px solid #a8c7fa; color: #474747; padding-left: 14px; }
.tab.binance .ic { color: #f5bc32; }
.tab span { width: 39px; margin-left: 13px; overflow: hidden; font-size: 17px; line-height: 24px; padding-top: 2px; -webkit-mask-image: linear-gradient(90deg, #000 60%, transparent); mask-image: linear-gradient(90deg, #000 60%, transparent); }
.newtab { width: 50px; height: 36px; margin-top: 12px; }
.wincontrols { margin-left: auto; display: flex; }
.wincontrols button { width: 69px; height: 58px; color: #000; }

.addressrow { height: 69px; display: flex; align-items: center; background: #fff; border-radius: 12px 12px 0 0; border-bottom: 2px solid #e0e0e0; color: #3c4043; box-shadow: 0 -12px 0 0 #d3e1fd; }
.navrow { flex: none; width: 180px; display: flex; padding-left: 6px; box-sizing: border-box; }
.navrow button { width: 54px; }
.off { opacity: .4; }
.omnibox { flex: 1; height: 51px; display: flex; align-items: center; border-radius: 26px; background: #ecf0fa; margin-right: 21px; padding: 0 22px 0 8px; gap: 24px; }
.omnibox .site { width: 36px; height: 36px; border-radius: 50%; background: #fff; margin-right: -12px; }
.omnibox input { flex: 1; font-size: 20px; color: #303134; }
.profile { width: 30px; height: 30px; border-radius: 50%; background: #455a64; color: #fff; font-size: 14px; margin: 0 6px 0 3px; }
.menu { width: 66px; }

.toolbar { height: 43px; display: flex; align-items: center; background: #fff; margin-bottom: 4px; }
.seg { flex: none; display: flex; align-items: center; height: 25px; box-sizing: border-box; }
.seg-symbol, .seg-int, .seg-style, .seg-ind, .seg-alert, .seg-name { border-right: 1px solid #e0e3eb; }
.seg-symbol, .seg-ind, .seg-alert, .seg-name { font-size: 15px; }
.on { color: #2962ff; }
.seg-user { width: 68px; padding-left: 14px; }
.user { position: relative; width: 30px; height: 30px; border-radius: 50%; background: #5b9c92; color: #fff; font-size: 20px; }
.user b { position: absolute; right: -13px; top: -5px; width: 22px; height: 20px; border-radius: 10px; background: #f23645; font-size: 11px; line-height: 20px; }
.seg-symbol { width: 152px; justify-content: space-between; padding: 0 14px 0 2px; font-weight: 700; }
.symbol { gap: 2px; }
.seg-int { width: 423px; justify-content: space-between; padding: 0 3px 0 14px; }
.seg-int .drop { margin-left: -8px; }
.seg-style { width: 105px; justify-content: space-between; padding: 0 3px 0 8px; }
.seg-ind { width: 195px; justify-content: space-between; padding: 0 13px 0 14px; }
.seg-ind button:first-child { gap: 2px; font-weight: 500; }
.seg-alert { width: 193px; justify-content: space-between; padding: 0 15px 0 13px; }
.seg-alert button { gap: 3px; }
.seg-undo { flex: 1; padding-left: 14px; gap: 18px; }
.seg-name { width: 143px; justify-content: space-between; padding-right: 4px; }
.unnamed { flex-direction: column; line-height: 18px; }
.unnamed small { font-size: 11px; line-height: 12px; color: #2962ff; }
.seg-right { width: 262px; justify-content: space-between; padding: 0 5px 0 12px; }
.publish { width: 78px; height: 31px; border-radius: 16px; background: #2a2e39; color: #fff; font-weight: 600; }

.work { position: relative; flex: 1; display: grid; grid-template-columns: 59px minmax(0, 1fr) 51px; column-gap: 4px; }
.left, .right { background: #fff; display: flex; flex-direction: column; }
.left { border-radius: 0 5px 0 0; padding-top: 8px; }
.right { border-radius: 5px 0 0 0; justify-content: space-between; padding: 1px 0; }
.tools { display: flex; flex-direction: column; }
.tools button { flex: 1; }
.t8 { height: 324px; }
.t2 { height: 81px; }
.t4 { height: 163px; }
.t1 { height: 40px; }
.left hr { flex: none; width: 41px; height: 1px; border: 0; background: #e0e3eb; margin: 6px 9px; }
.fav { width: 34px; height: 34px; margin: auto 0 20px 12px; border-radius: 5px; background: #2962ff; color: #fff; }
.side-top button { width: 51px; height: 51px; }
.side-bottom button { width: 51px; height: 52px; }

.center { display: flex; flex-direction: column; min-width: 0; }
.chart { position: relative; flex: 1; min-height: 750px; display: flex; background: #fff; border-radius: 5px 5px 0 0; }
.plot { flex: 1; min-width: 0; height: 750px; }
.note { font-size: 11px; text-anchor: middle; }
.days { font-size: 13px; text-anchor: middle; }
.year { font-weight: 700; }
.when { font-size: 13px; font-weight: 600; fill: #fff; }
.when.end { text-anchor: end; }

.legend { position: absolute; left: 10px; top: 5px; }
.title { display: flex; align-items: center; width: 802px; height: 26px; background: rgba(255, 255, 255, .5); }
.title svg { flex: none; }
.title h1 { margin: 0 0 0 5px; width: 300px; font-size: 17px; font-weight: 400; white-space: nowrap; }
.pill { flex: none; display: flex; align-items: center; width: 44px; height: 20px; margin-left: 19px; border-radius: 10px; background: linear-gradient(90deg, #daf1ed 50%, #f0d8f4 50%); }
.pill i { width: 10px; height: 10px; margin: 0 6px; border-radius: 50%; background: #089981; }
.title p { margin: 0 0 0 16px; display: flex; gap: 9px; font-size: 14px; white-space: nowrap; }
.trade { display: flex; align-items: center; height: 47px; width: 203px; justify-content: space-between; background: rgba(255, 255, 255, .5); font-size: 11px; }
.trade button { width: 81px; height: 38px; box-sizing: border-box; flex-direction: column; background: #fff; border: 1px solid; border-radius: 6px; font-size: 12px; line-height: 15px; }
.trade b { font-size: 14px; line-height: 16px; }
.sell { color: #f23645; }
.buy { color: #2962ff; }
.more { width: 36px; height: 23px; margin: 2px 0 0 1px; border: 1px solid #d8dae0; border-radius: 4px; background: rgba(255, 255, 255, .8); box-sizing: border-box; font-size: 15px; gap: 1px; }
.brand { position: absolute; left: 13px; bottom: 40px; display: flex; align-items: center; gap: 5px; font: 600 23px/30px Inter, "Open Sans", sans-serif; }

.axis { position: relative; flex: none; width: 74px; font-size: 13px; }
.axis ul { list-style: none; margin: 0; padding: 0 12px 0 0; height: 721px; display: flex; flex-direction: column; justify-content: space-between; text-align: right; line-height: 16px; }
.tag { position: absolute; left: 1px; width: 67px; height: 19px; box-sizing: border-box; padding-right: 6px; border-radius: 0 2px 2px 0; color: #fff; font-weight: 600; line-height: 18px; text-align: right; }
.tag.red { top: 190px; background: #f23645; }
.tag.gray { top: 267px; background: #787b86; }
.tag.cur { top: 465px; height: 25px; line-height: 24px; background: #131722; }
.tag.cur button { position: absolute; left: -26px; top: 0; width: 25px; height: 25px; background: #131722; border-radius: 2px 0 0 2px; }
.tag.last { top: 503px; height: 35px; line-height: 17px; background: #000; }
.tag.last small { display: block; font-size: 13px; line-height: 15px; color: #b8b8b8; font-weight: 400; }
.tag.green { top: 580px; background: #089981; }
.axisset { position: absolute; left: 27px; top: 725px; }

.rangebar { height: 42px; display: flex; align-items: center; background: #fff; margin-top: 2px; border-radius: 0 0 5px 5px; padding: 0 12px 0 16px; }
.ranges { width: 283px; display: flex; justify-content: space-between; }
.rangebar i { width: 1px; height: 25px; background: #e0e3eb; margin: 0 12px 0 11px; }
.rangebar span { margin-left: auto; font-size: 15px; }
.panels { height: 44px; display: flex; align-items: center; background: #fff; margin-top: 4px; border-radius: 5px 0 0 0; padding-left: 17px; gap: 36px; font-size: 15px; }
.screener { gap: 6px; margin-right: -15px; }

.floating { position: absolute; right: 42px; bottom: 0; height: 42px; width: 711px; display: flex; align-items: center; background: #fff; border-radius: 8px; box-shadow: 0 1px 5px rgba(0, 0, 0, .25); }
.floating button { flex: 1; }
.grip { width: 26px; color: #b2b5be; display: flex; justify-content: center; }

.taskbar { position: relative; height: 60px; display: flex; align-items: stretch; background: #1e2022; color: #fff; }
.taskbar > * { flex: none; }
.start { width: 72px; }
.search { width: 432px; box-sizing: border-box; display: flex; align-items: center; background: #f2f2f2; border: 2px solid #c0c0c0; padding-left: 15px; color: #222; }
.search input { width: 0; flex: 1; margin-left: 15px; font-size: 21px; }
.search input::placeholder { color: #222; opacity: 1; }
.search .ic { margin-right: 8px; }
.apps { display: flex; }
.apps button { position: relative; width: 75px; }
.apps .current { background: #484b4d; box-shadow: inset 0 -3px #76b9ed; }
.apps .open::after { content: ""; position: absolute; left: 8px; right: 6px; bottom: 0; height: 3px; background: #76b9ed; }
.apps b { position: absolute; border-radius: 50%; display: flex; align-items: center; justify-content: center; font-size: 13px; }
.apps .pl { left: 36px; top: 27px; width: 24px; height: 24px; background: #455a64; }
.apps .pp { left: 38px; top: 30px; width: 18px; height: 18px; background: radial-gradient(circle at 50% 60%, #3a2418 20%, #c9a77c 50%, #6b4a32); }
.apps .count { left: 42px; top: 29px; width: 28px; height: 24px; border-radius: 13px; background: rgba(30, 32, 34, .9); border: 1px solid #888; font-size: 16px; }
.weather { margin-left: auto; display: flex; align-items: center; font-size: 20px; white-space: nowrap; padding-top: 2px; }
.weather span { position: relative; margin-right: 12px; }
.weather b { position: absolute; left: 18px; top: -2px; width: 18px; height: 18px; border-radius: 50%; background: #c42b1c; font-size: 12px; line-height: 18px; text-align: center; }
.weather em { font-style: normal; margin-right: 14px; }
.tray { display: flex; align-items: center; width: 412px; box-sizing: border-box; padding-left: 40px; gap: 24px; }
.tray time { flex: none; width: 92px; font-size: 17px; line-height: 28px; text-align: center; white-space: nowrap; }
.watermark { position: absolute; right: 8px; top: 20px; display: flex; align-items: center; gap: 4px; font-size: 24px; line-height: 30px; opacity: .9; }
.ncount { position: absolute; right: 28px; bottom: 5px; width: 22px; height: 22px; border: 1px solid #888; border-radius: 50%; background: rgba(40, 42, 44, .7); font-size: 12px; line-height: 22px; text-align: center; }
</style>
